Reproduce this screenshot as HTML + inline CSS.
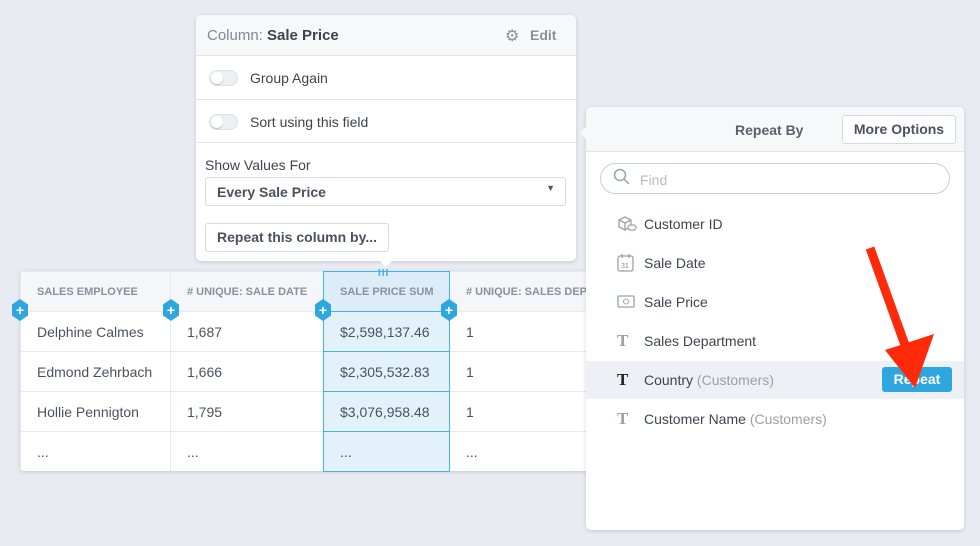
<!DOCTYPE html>
<html><head><style>
*{box-sizing:border-box;margin:0;padding:0}
body{width:980px;height:546px;background:#e8ebf1;font-family:"Liberation Sans",sans-serif;position:relative;overflow:hidden;color:#3d4450}
.abs{position:absolute}
.pop{background:#fff;border-radius:5px;box-shadow:0 1px 4px rgba(0,0,0,.15)}
.tog{position:absolute;width:29px;height:16px;border-radius:8px;background:#eceff3;border:1px solid #dde1e7}
.tog:after{content:"";position:absolute;left:1px;top:1px;width:12px;height:12px;border-radius:50%;background:#fff;box-shadow:0 1px 1px rgba(0,0,0,.2)}
.btn{position:absolute;border:1px solid #d6dae0;border-radius:3px;background:#fff;font-weight:bold;color:#4a5260;font-size:14px;text-align:center}
table{border-collapse:collapse}
td,th{height:40px;border:1px solid #e6e9ee;font-size:14px;padding-left:16px;text-align:left;color:#4a5260;font-weight:normal}
th{font-size:11px;font-weight:bold;color:#8a919c;background:#f4f6f9}
td.sel{background:#e3f1fb}
th.sel{background:#dcedf9}
.plus{position:absolute;z-index:3;width:16px;height:22px;background:#2ea7e0;clip-path:polygon(50% 0,100% 25%,100% 75%,50% 100%,0 75%,0 25%);color:#fff;font-weight:bold;font-size:14px;text-align:center;line-height:22px}
.item{position:absolute;left:644px;font-size:14px;color:#3d4450}
.item span{color:#9aa1ab}
.ic{position:absolute;left:617px;font-family:"Liberation Serif",serif;font-weight:bold;font-size:17px;color:#9aa1ab}
.bl{position:absolute;z-index:2;background:#40b4ea}
</style></head><body>

<!-- table -->
<div class="abs pop" style="left:20px;top:271px;width:580px;height:200px;border-radius:4px;overflow:hidden">
<table style="width:580px;table-layout:fixed">
<colgroup><col style="width:150px"><col style="width:153px"><col style="width:126px"><col style="width:151px"></colgroup>
<tr><th>SALES EMPLOYEE</th><th># UNIQUE: SALE DATE</th><th class="sel">SALE PRICE SUM</th><th style="white-space:nowrap;overflow:hidden"># UNIQUE: SALES DEP</th></tr>
<tr><td>Delphine Calmes</td><td>1,687</td><td class="sel">$2,598,137.46</td><td>1</td></tr>
<tr><td>Edmond Zehrbach</td><td>1,666</td><td class="sel">$2,305,532.83</td><td>1</td></tr>
<tr><td>Hollie Pennigton</td><td>1,795</td><td class="sel">$3,076,958.48</td><td>1</td></tr>
<tr><td>...</td><td>...</td><td class="sel">...</td><td>...</td></tr>
</table></div>
<div class="bl" style="left:323px;top:271px;width:1px;height:201px"></div>
<div class="bl" style="left:449px;top:271px;width:1px;height:201px"></div>
<div class="bl" style="left:323px;top:271px;width:127px;height:1px"></div>
<div class="bl" style="left:323px;top:311px;width:127px;height:1px"></div>
<div class="bl" style="left:323px;top:351px;width:127px;height:1px"></div>
<div class="bl" style="left:323px;top:391px;width:127px;height:1px"></div>
<div class="bl" style="left:323px;top:431px;width:127px;height:1px"></div>
<div class="bl" style="left:323px;top:471px;width:127px;height:1px"></div>
<div class="abs" style="left:378px;top:268px;color:#3bb0e6;font-size:10px;font-weight:bold;letter-spacing:1px">III</div>
<div class="plus" style="left:12px;top:299px">+</div>
<div class="plus" style="left:163px;top:299px">+</div>
<div class="plus" style="left:315px;top:299px">+</div>
<div class="plus" style="left:441px;top:299px">+</div>

<!-- column popup -->
<div class="abs pop" style="left:196px;top:15px;width:380px;height:246px">
<div class="abs" style="left:0;top:0;width:380px;height:41px;background:#f7f8fa;border-bottom:1px solid #e2e5ea;border-radius:5px 5px 0 0"></div>
<div class="abs" style="left:11px;top:12px;font-size:15px;color:#7d8794">Column: <b style="color:#3d4450">Sale Price</b></div>
<div class="abs" style="left:309px;top:11px;font-size:16px;color:#8a919c">⚙</div>
<div class="abs" style="left:334px;top:12px;font-size:14px;font-weight:bold;color:#8a919c">Edit</div>
<div class="tog" style="left:13px;top:55px"></div>
<div class="abs" style="left:54px;top:55px;font-size:14px">Group Again</div>
<div class="abs" style="left:0;top:84px;width:380px;border-top:1px solid #e2e5ea"></div>
<div class="tog" style="left:13px;top:99px"></div>
<div class="abs" style="left:54px;top:99px;font-size:14px">Sort using this field</div>
<div class="abs" style="left:0;top:127px;width:380px;border-top:1px solid #e2e5ea"></div>
<div class="abs" style="left:9px;top:142px;font-size:14px">Show Values For</div>
<div class="btn" style="left:9px;top:162px;width:361px;height:29px;text-align:left;padding:6px 11px">Every Sale Price<span style="position:absolute;right:10px;top:5px;font-size:9px;color:#555">▼</span></div>
<div class="btn" style="left:9px;top:208px;width:184px;height:29px;line-height:27px">Repeat this column by...</div>
<div class="abs" style="left:184px;top:246px;width:0;height:0;border:6px solid transparent;border-top-color:#fff"></div>
</div>

<!-- repeat panel -->
<div class="abs pop" style="left:586px;top:107px;width:378px;height:423px">
<div class="abs" style="left:0;top:0;width:378px;height:45px;background:#f7f8fa;border-bottom:1px solid #e2e5ea;border-radius:5px 5px 0 0"></div>
<div class="abs" style="left:-6px;top:20px;width:0;height:0;border:6px solid transparent;border-right-color:#f7f8fa;border-left:0"></div>
<div class="abs" style="left:149px;top:15px;font-size:14px;font-weight:bold;color:#5a626e">Repeat By</div>
<div class="btn" style="left:256px;top:8px;width:114px;height:29px;line-height:27px">More Options</div>
<div class="abs" style="left:14px;top:56px;width:350px;height:31px;border:1px solid #c9ced6;border-radius:16px"></div>
<svg class="abs" style="left:27px;top:61px" width="18" height="18" viewBox="0 0 18 18"><circle cx="7" cy="7" r="5.5" fill="none" stroke="#9aa1ab" stroke-width="1.5"/><line x1="11" y1="11" x2="16" y2="16" stroke="#9aa1ab" stroke-width="1.5"/></svg>
<div class="abs" style="left:54px;top:65px;font-size:14px;color:#b5bbc4">Find</div>
<div class="abs" style="left:0;top:254px;width:378px;height:38px;background:#edf0f4"></div>
</div>
<svg class="abs" style="left:617px;top:215px" width="20" height="18" viewBox="0 0 20 18"><path d="M2 5 L8 2 L14 5 L14 12 L8 15 L2 12 Z M2 5 L8 8 L14 5 M8 8 L8 15" fill="none" stroke="#9aa1ab" stroke-width="1.3"/><rect x="11" y="10" width="8" height="5" rx="2.5" fill="#fff" stroke="#9aa1ab" stroke-width="1.2"/></svg>
<div class="item" style="top:216px">Customer ID</div>
<svg class="abs" style="left:617px;top:253px" width="17" height="19" viewBox="0 0 17 19"><rect x="1" y="3" width="15" height="15" rx="2" fill="none" stroke="#9aa1ab" stroke-width="1.3"/><line x1="5" y1="1" x2="5" y2="5" stroke="#9aa1ab" stroke-width="1.3"/><line x1="12" y1="1" x2="12" y2="5" stroke="#9aa1ab" stroke-width="1.3"/><text x="4" y="15" font-size="7" fill="#7d8794" font-family="Liberation Sans">31</text></svg>
<div class="item" style="top:255px">Sale Date</div>
<svg class="abs" style="left:617px;top:295px" width="18" height="13" viewBox="0 0 18 13"><rect x="1" y="1" width="16" height="11" rx="1" fill="none" stroke="#9aa1ab" stroke-width="1.3"/><circle cx="9" cy="6.5" r="2.5" fill="none" stroke="#9aa1ab" stroke-width="1"/></svg>
<div class="item" style="top:294px">Sale Price</div>
<div class="ic" style="top:331px">T</div>
<div class="item" style="top:333px">Sales Department</div>
<div class="ic" style="top:370px;color:#222">T</div>
<div class="item" style="top:372px">Country <span>(Customers)</span></div>
<div class="abs" style="left:882px;top:367px;width:70px;height:25px;background:#2ea7e0;border-radius:3px;color:#fff;font-weight:bold;font-size:14px;text-align:center;line-height:25px">Repeat</div>
<div class="ic" style="top:409px">T</div>
<div class="item" style="top:411px">Customer Name <span>(Customers)</span></div>

<!-- arrow -->
<svg class="abs" style="left:850px;top:240px" width="110" height="160" viewBox="0 0 110 160"><line x1="20" y1="8" x2="55" y2="105" stroke="#ff2a0a" stroke-width="9"/><polygon points="35,110 84,94 65,148" fill="#ff2a0a"/></svg>
</body></html>
